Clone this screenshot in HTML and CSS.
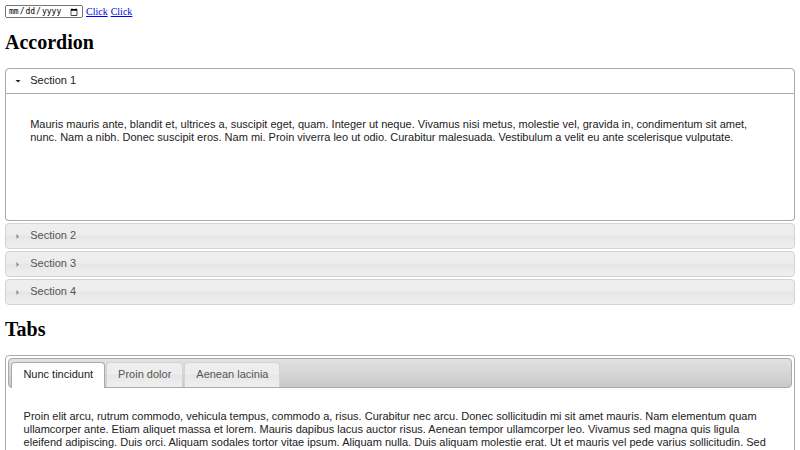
FILE: index.html
```html
<!DOCTYPE html>
<html>
<head>
<meta charset="utf-8">
<link rel="stylesheet" href="styles.css">
</head>
<body>
<div class="topline"><input type="date" class="date"> <a href="#" class="lnk">Click</a> <a href="#" class="lnk">Click</a></div>
<h1>Accordion</h1>
<div class="accordion">
  <div class="acc-header active"><svg class="icon" width="16" height="12" viewBox="0 2 16 12"><path d="M1.5 7h5l-2.5 2.5z" fill="#222"/></svg>Section 1</div>
  <div class="acc-content"><p>Mauris mauris ante, blandit et, ultrices a, suscipit eget, quam. Integer ut neque. Vivamus nisi metus, molestie vel, gravida in, condimentum sit amet, nunc. Nam a nibh. Donec suscipit eros. Nam mi. Proin viverra leo ut odio. Curabitur malesuada. Vestibulum a velit eu ante scelerisque vulputate.</p></div>
  <div class="acc-header"><svg class="icon" width="16" height="12" viewBox="0 2 16 12"><path d="M2.5 6v5l2.5-2.5z" fill="#888"/></svg>Section 2</div>
  <div class="acc-header"><svg class="icon" width="16" height="12" viewBox="0 2 16 12"><path d="M2.5 6v5l2.5-2.5z" fill="#888"/></svg>Section 3</div>
  <div class="acc-header"><svg class="icon" width="16" height="12" viewBox="0 2 16 12"><path d="M2.5 6v5l2.5-2.5z" fill="#888"/></svg>Section 4</div>
</div>
<h1>Tabs</h1>
<div class="tabs">
  <ul class="tabs-nav">
    <li class="tab active"><a href="#">Nunc tincidunt</a></li>
    <li class="tab"><a href="#">Proin dolor</a></li>
    <li class="tab"><a href="#">Aenean lacinia</a></li>
  </ul>
  <div class="tab-panel"><p>Proin elit arcu, rutrum commodo, vehicula tempus, commodo a, risus. Curabitur nec arcu. Donec sollicitudin mi sit amet mauris. Nam elementum quam ullamcorper ante. Etiam aliquet massa et lorem. Mauris dapibus lacus auctor risus. Aenean tempor ullamcorper leo. Vivamus sed magna quis ligula eleifend adipiscing. Duis orci. Aliquam sodales tortor vitae ipsum. Aliquam nulla. Duis aliquam molestie erat. Ut et mauris vel pede varius sollicitudin. Sed ut dolor nec orci tincidunt interdum. Phasellus ipsum. Nunc tristique tempus lectus.</p></div>
</div>
</body>
</html>
```
FILE: styles.css
```css
body {
  margin: 5px;
  font-family: "Liberation Serif", serif;
  font-size: 10px;
  background: #fff;
}
.topline {
  height: 13px;
  line-height: 13px;
  display: flex;
  align-items: flex-start;
  gap: 3px;
}
.date {
  font-family: "DejaVu Sans Mono", monospace;
  font-size: 8px;
  margin: 0;
  width: 78px;
  height: 13px;
  box-sizing: border-box;
  padding: 0 1px;
}
.lnk {
  color: #0000ee;
}
h1 {
  font-size: 20px;
  font-weight: bold;
  margin: 13.4px 0;
}
.accordion, .tabs {
  font-family: "Liberation Sans", Arial, sans-serif;
  font-size: 11px;
}
.acc-header {
  margin-top: 2px;
  padding: 5.5px 5.5px 5.5px 7.7px;
  border: 1px solid #d3d3d3;
  border-radius: 4px;
  color: #555;
  background: linear-gradient(to bottom, #eeeeee 0%, #ededed 44%, #e6e6e6 52%, #e9e9e9 64%, #efefef 100%);
  display: flex;
  align-items: center;
  line-height: 13px;
}
.accordion .acc-header:first-child {
  margin-top: 0;
}
.acc-header.active {
  border-color: #aaa;
  background: #fff;
  color: #212121;
  border-radius: 4px 4px 0 0;
}
.icon {
  flex: none;
  margin-right: 0.5px;
}
.acc-content {
  border: 1px solid #aaa;
  border-top: 0;
  border-radius: 0 0 4px 4px;
  background: #fff;
  color: #222;
  padding: 11px 24.2px;
  height: 104px;
  overflow: auto;
}
.acc-content p {
  margin: 13px 0 11px;
  line-height: 13.5px;
}
.tab-panel p {
  margin: 11.5px 0 11px;
  line-height: 13px;
}
.tabs {
  border: 1px solid #aaa;
  border-radius: 4px;
  padding: 2.2px;
  background: #fff;
  color: #222;
}
.tabs-nav {
  list-style: none;
  margin: 0;
  padding: 2.2px 2.2px 0;
  border: 1px solid #aaa;
  border-radius: 4px;
  background: linear-gradient(to bottom, #e2e2e2, #c9c9c9);
  display: flex;
}
.tab {
  margin: 1px 1px 0 0;
  border: 1px solid #d3d3d3;
  border-bottom-width: 0;
  border-radius: 4px 4px 0 0;
  background: linear-gradient(to bottom, #eeeeee 0%, #ededed 44%, #e6e6e6 52%, #e9e9e9 64%, #efefef 100%);
  white-space: nowrap;
}
.tab a {
  display: block;
  padding: 5.5px 11px;
  line-height: 13px;
  color: #555;
  text-decoration: none;
}
.tab.active {
  border-color: #aaa;
  background: #fff;
  margin-bottom: -1px;
  padding-bottom: 1px;
}
.tab.active a {
  color: #212121;
}
.tab-panel {
  padding: 11px 15.4px;
}
```
